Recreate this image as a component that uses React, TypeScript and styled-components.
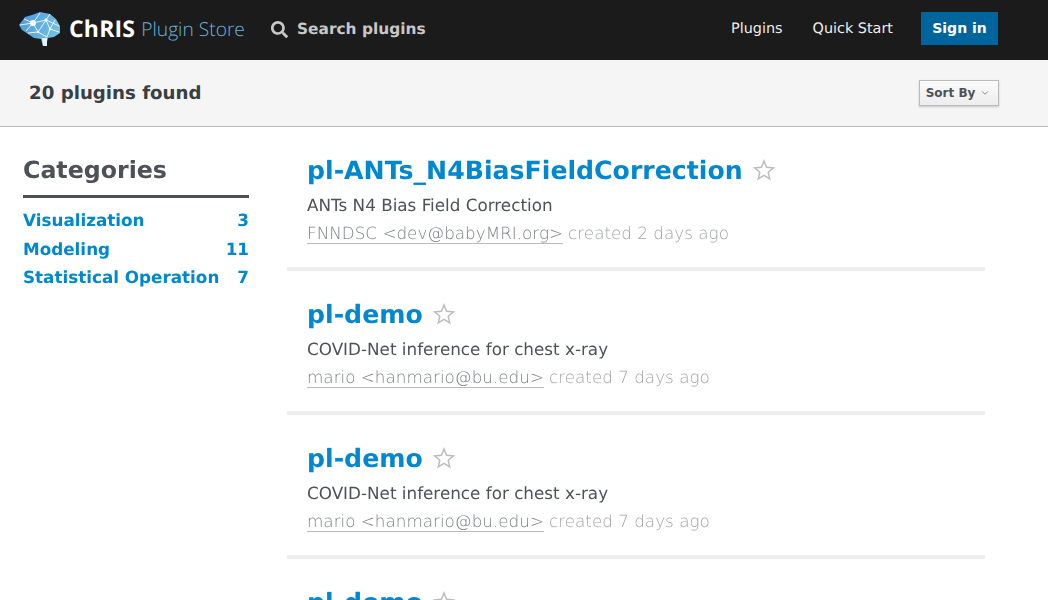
import React from 'react';
import styled, { createGlobalStyle } from 'styled-components';
import { FaSearch } from 'react-icons/fa';
import { ChevronDown } from 'lucide-react';

const GlobalStyle = createGlobalStyle`
  html, body {
    margin: 0;
    padding: 0;
    height: 600px;
    overflow: hidden;
    background: #fff;
    font-family: "DejaVu Sans", Verdana, sans-serif;
    text-rendering: geometricPrecision;
  }
`;

const Page = styled.div`
  will-change: opacity;
`;

const Header = styled.header`
  height: 60px;
  background: #1b1b1b;
  display: flex;
  align-items: center;
  padding: 0 50px 0 19px;
`;

const Brand = styled.div`
  display: flex;
  align-items: center;
  width: 252px;
  height: 100%;
`;

const BrandName = styled.span`
  font-family: "Open Sans", sans-serif;
  font-weight: 700;
  font-size: 23px;
  color: #fff;
  margin: -4px 0 0 8px;
  letter-spacing: 0.2px;
`;

const BrandStore = styled.span`
  font-family: "Open Sans", sans-serif;
  font-weight: 300;
  font-size: 19.2px;
  color: #6cb4dc;
  margin: -4px 0 0 6px;
`;

const SearchBox = styled.div`
  display: flex;
  align-items: center;
  gap: 9px;
  flex: 1;
  color: #c8c8c8;
  font-size: 15.4px;
  font-weight: 700;
  margin-bottom: 2px;
`;

const NavLink = styled.a`
  color: #ededed;
  font-size: 14.4px;
  margin-right: 30px;
  margin-bottom: 3px;
`;

const SignIn = styled.button`
  width: 77px;
  height: 33px;
  margin-left: -2px;
  margin-bottom: 3px;
  background: #00659c;
  border: none;
  color: #fff;
  font-family: inherit;
  font-size: 14px;
  font-weight: 700;
  padding: 0 0 2px;
`;

const Toolbar = styled.div`
  height: 66px;
  background: #f5f5f5;
  border-bottom: 1px solid #b8bbbe;
  display: flex;
  align-items: center;
  justify-content: space-between;
  padding: 0 49px 0 29px;
`;

const FoundCount = styled.h2`
  margin: 0;
  font-size: 18.2px;
  font-weight: 700;
  color: #393f44;
`;

const SortButton = styled.button`
  width: 80px;
  height: 26px;
  background: linear-gradient(#fafafa, #ededed);
  border: 1px solid #bbb;
  box-shadow: 0 1px 2px rgba(0, 0, 0, 0.2);
  color: #4d5258;
  font-family: inherit;
  font-size: 12px;
  font-weight: 700;
  display: flex;
  align-items: center;
  justify-content: center;
  gap: 5px;
  padding: 0 2px 0 0;
`;

const Content = styled.div`
  display: flex;
  align-items: flex-start;
  padding-left: 23px;
`;

const Sidebar = styled.aside`
  width: 226px;
  margin-right: 38px;
  padding-top: 27px;
`;

const SidebarTitle = styled.h3`
  margin: 0 0 8px;
  padding-bottom: 8px;
  border-bottom: 3px solid #4d5258;
  font-size: 23.7px;
  line-height: 33px;
  font-weight: 700;
  color: #4d5258;
`;

const CategoryRow = styled.div`
  display: flex;
  justify-content: space-between;
  font-size: 16.8px;
  line-height: 28.5px;
  font-weight: 700;
  color: #0088ce;
`;

const PluginList = styled.main`
  width: 698px;
`;

const PluginItem = styled.article`
  height: 114px;
  border-bottom: 4px solid #ededed;
  padding: 26px 20px 0;
`;

const TitleRow = styled.div`
  display: flex;
  align-items: center;
  gap: 10px;
  height: 34px;
`;

const PluginTitle = styled.a`
  font-size: 25.2px;
  font-weight: 700;
  color: #0088ce;
`;

const Description = styled.p`
  margin: 4px 0 0;
  font-size: 16.8px;
  line-height: 28px;
  color: #4d5258;
`;

const Meta = styled.div`
  font-family: "DejaVu Sans ExtraLight", "DejaVu Sans", sans-serif;
  font-size: 16.8px;
  line-height: 28px;
  font-weight: 200;
  color: #a2a4a6;
`;

const Author = styled.span`
  color: #7f8387;
  border-bottom: 1px solid #bbb;
  margin-right: 5px;
`;

const BrainLogo = () => (
  <svg width="42" height="36" viewBox="0 0 42 36" aria-hidden="true">
    <defs>
      <linearGradient id="brainFill" x1="0" y1="0" x2="1" y2="0.4">
        <stop offset="0" stopColor="#4a98e0" />
        <stop offset="1" stopColor="#72c0e0" />
      </linearGradient>
    </defs>
    <path
      d="M0 13 L6 5 L13 3 L21 0 L31 2 L37 7 L41 14 L41 21 L35 25 L29 26 L28 30 L28 34 L24 34 L22 27 L15 26 L9 22 L3 18 Z"
      fill="url(#brainFill)"
    />
    <path
      d="M1 13 L14 11 L21 1 M14 11 L27 8 L31 2 M27 8 L40 14 M14 11 L19 20 L27 8 M19 20 L28 25 M19 20 L9 21 M14 11 L5 7 M27 8 L31 17 L40 20 M31 17 L28 25 M14 11 L7 19 M31 17 L36 8"
      fill="none"
      stroke="#eaf5fb"
      strokeWidth="1"
    />
    <circle cx="14" cy="11" r="3" fill="#fff" />
    <circle cx="27" cy="8" r="1.4" fill="#fff" />
    <circle cx="19" cy="20" r="1.2" fill="#fff" />
    <circle cx="31" cy="17" r="1.2" fill="#fff" />
    <path d="M23 26 L28 26 L28 34 L24 34 Z" fill="#e8f4fb" />
  </svg>
);

const StarOutline = () => (
  <svg width="22" height="22" viewBox="0 0 22 22" aria-hidden="true">
    <path
      d="M11 2 L13.6 8.3 L20.4 8.8 L15.2 13.2 L16.8 19.9 L11 16.3 L5.2 19.9 L6.8 13.2 L1.6 8.8 L8.4 8.3 Z"
      fill="none"
      stroke="#bdbdbd"
      strokeWidth="1.5"
    />
  </svg>
);

const categories = [
  { name: 'Visualization', count: 3 },
  { name: 'Modeling', count: 11 },
  { name: 'Statistical Operation', count: 7 },
];

const plugins = [
  {
    title: 'pl-ANTs_N4BiasFieldCorrection',
    description: 'ANTs N4 Bias Field Correction',
    author: 'FNNDSC <dev@babyMRI.org>',
    created: 'created 2 days ago',
  },
  {
    title: 'pl-demo',
    description: 'COVID-Net inference for chest x-ray',
    author: 'mario <hanmario@bu.edu>',
    created: 'created 7 days ago',
  },
  {
    title: 'pl-demo',
    description: 'COVID-Net inference for chest x-ray',
    author: 'mario <hanmario@bu.edu>',
    created: 'created 7 days ago',
  },
  {
    title: 'pl-demo',
    description: 'COVID-Net inference for chest x-ray',
    author: 'mario <hanmario@bu.edu>',
    created: 'created 7 days ago',
  },
];

const App = () => {
  return (
    <Page>
      <GlobalStyle />
      <Header>
        <Brand>
          <BrainLogo />
          <BrandName>ChRIS</BrandName>
          <BrandStore>Plugin Store</BrandStore>
        </Brand>
        <SearchBox>
          <FaSearch size={17} color="#c8c8c8" />
          Search plugins
        </SearchBox>
        <NavLink>Plugins</NavLink>
        <NavLink>Quick Start</NavLink>
        <SignIn>Sign in</SignIn>
      </Header>
      <Toolbar>
        <FoundCount>20 plugins found</FoundCount>
        <SortButton>
          Sort By
          <ChevronDown size={10} strokeWidth={1.5} color="#4d5258" />
        </SortButton>
      </Toolbar>
      <Content>
        <Sidebar>
          <SidebarTitle>Categories</SidebarTitle>
          {categories.map((c) => (
            <CategoryRow key={c.name}>
              <span>{c.name}</span>
              <span>{c.count}</span>
            </CategoryRow>
          ))}
        </Sidebar>
        <PluginList>
          {plugins.map((p, i) => (
            <PluginItem key={i}>
              <TitleRow>
                <PluginTitle>{p.title}</PluginTitle>
                <StarOutline />
              </TitleRow>
              <Description>{p.description}</Description>
              <Meta>
                <Author>{p.author}</Author>
                {p.created}
              </Meta>
            </PluginItem>
          ))}
        </PluginList>
      </Content>
    </Page>
  );
};

export default App;
